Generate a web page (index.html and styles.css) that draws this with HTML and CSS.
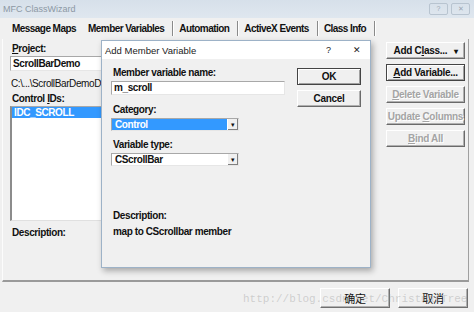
FILE: index.html
```html
<!DOCTYPE html>
<html lang="en">
<head>
    <meta charset="UTF-8">
    <title>MFC ClassWizard</title>
    <link rel="stylesheet" href="styles.css">
</head>
<body>
    <div class="window">
        <div class="titlebar">
            <span class="title">MFC ClassWizard</span>
            <div class="caption-btns">
                <span class="cap-btn">?</span>
                <span class="cap-btn">&#x2715;</span>
            </div>
        </div>

        <div class="tabs">
            <span class="tab">Message Maps</span>
            <span class="tab sep">Member Variables</span>
            <span class="tab sep">Automation</span>
            <span class="tab sep">ActiveX Events</span>
            <span class="tab sep">Class Info</span>
        </div>

        <div class="panel">
            <div class="left">
                <label class="lbl first"><u>P</u>roject:</label>
                <div class="field">ScrollBarDemo</div>
                <div class="path">C:\...\ScrollBarDemoDlg.h, ScrollBarDemoDlg.cpp</div>
                <label class="lbl ids">Control <u>I</u>Ds:</label>
                <div class="listbox">
                    <div class="list-item selected">IDC_SCROLL</div>
                </div>
                <label class="lbl">Description:</label>
            </div>
            <div class="actions">
                <button class="btn">Add C<u>l</u>ass... <span class="arrow">&#9662;</span></button>
                <button class="btn default"><u>A</u>dd Variable...</button>
                <button class="btn disabled"><u>D</u>elete Variable</button>
                <button class="btn disabled">Update <u>C</u>olumns</button>
                <button class="btn disabled"><u>B</u>ind All</button>
            </div>
        </div>

        <div class="footer">
            <button class="btn cjk">确定</button>
            <button class="btn cjk">取消</button>
        </div>

        <div class="watermark">http://blog.csdn.net/ChristmasTree</div>

        <div class="dialog">
            <div class="dlg-title">
                <span>Add Member Variable</span>
                <span class="dlg-help">?</span>
                <span class="dlg-close">&#x2715;</span>
            </div>
            <div class="dlg-body">
                <div class="dlg-form">
                    <label class="lbl first">Member variable name:</label>
                    <div class="field name">m_scroll</div>
                    <label class="lbl cat">Category:</label>
                    <div class="combo">
                        <span class="combo-text selected">Control</span>
                        <span class="combo-btn">&#9662;</span>
                    </div>
                    <label class="lbl vtype">Variable type:</label>
                    <div class="combo">
                        <span class="combo-text">CScrollBar</span>
                        <span class="combo-btn">&#9662;</span>
                    </div>
                    <label class="lbl desc">Description:</label>
                    <div class="desc-text">map to CScrollbar member</div>
                </div>
                <div class="dlg-buttons">
                    <button class="btn default">OK</button>
                    <button class="btn">Cancel</button>
                </div>
            </div>
        </div>
    </div>
</body>
</html>
```

FILE: styles.css
```css
body {
    margin: 0;
    background: #f0f0f0;
    font-family: "Liberation Sans", Arial, sans-serif;
    font-size: 10px;
    color: #111;
}
.window {
    position: relative;
    width: 474px;
    height: 312px;
    overflow: hidden;
    background: #f0f0f0;
    display: flex;
    flex-direction: column;
}
.titlebar {
    height: 18px;
    flex: none;
    display: flex;
    align-items: center;
    justify-content: space-between;
    padding: 0 4px 0 3px;
    background: linear-gradient(#d6e0ea, #dfe7ef);
}
.title {
    color: #8c98a4;
    font-size: 9px;
}
.caption-btns {
    display: flex;
    gap: 3px;
}
.cap-btn {
    width: 17px;
    height: 10px;
    border: 1px solid #b8c4d0;
    border-radius: 2px;
    color: #9aa6b2;
    font-size: 7px;
    line-height: 10px;
    text-align: center;
}

/* --- Tabs --- */
.tabs {
    height: 21px;
    flex: none;
    display: flex;
    align-items: center;
    padding-left: 6px;
}
.tab {
    font-weight: bold;
    letter-spacing: -0.55px;
    padding: 0 6px;
    line-height: 15px;
}
.tab.sep {
    border-right: 1px solid #8a8a8a;
    box-shadow: 1px 0 0 #fff;
    padding-right: 8px;
}

/* --- Main panel --- */
.panel {
    flex: 1;
    display: flex;
    margin: 0 5px 0 2px;
    border-left: 1px solid #fcfcfc;
    border-right: 1px solid #a0a0a0;
    border-bottom: 2px solid #9a9a9a;
    padding: 2px 3px 0 7px;
}
.left {
    width: 352px;
    display: flex;
    flex-direction: column;
}
.lbl {
    font-weight: bold;
    letter-spacing: -0.4px;
    line-height: 12px;
    margin-top: 6px;
    margin-left: 2px;
}
.lbl.first {
    margin-top: 2px;
}
.field {
    height: 13px;
    margin-top: 1px;
    background: #fff;
    border: 1px solid #a8a8a8;
    border-right-color: #e6e6e6;
    border-bottom-color: #e6e6e6;
    font-weight: bold;
    letter-spacing: -0.4px;
    line-height: 13px;
    padding-left: 2px;
    white-space: nowrap;
    overflow: hidden;
}
.path {
    width: 91px;
    margin-top: 7px;
    margin-left: 1px;
    letter-spacing: -0.4px;
    line-height: 12px;
    white-space: nowrap;
    overflow: hidden;
}
.lbl.ids {
    margin-top: 3px;
}
.listbox {
    height: 113px;
    margin-top: 1px;
    background: #fff;
    border-left: 2px solid #8c8c8c;
    border-top: 1px solid #a8a8a8;
    border-right: 1px solid #e0e0e0;
    border-bottom: 1px solid #e0e0e0;
}
.list-item {
    height: 11px;
    line-height: 11px;
    padding-left: 2px;
    font-weight: bold;
    letter-spacing: -0.4px;
}
.selected {
    background: #3399ff;
    color: #fff;
}
.left .lbl:last-child {
    margin-top: 6px;
}

/* --- Buttons --- */
.btn {
    font-family: inherit;
    font-size: 10px;
    font-weight: bold;
    letter-spacing: -0.3px;
    color: #111;
    width: 79px;
    height: 17px;
    padding: 0;
    background: #f0f0f0;
    border: 1px solid;
    border-color: #fff #6a6a6a #6a6a6a #fff;
    box-shadow: inset -1px -1px 0 #b0b0b0;
    text-align: center;
}
.btn.default {
    border-color: #444;
    box-shadow: inset 1px 1px 0 #fff, inset -1px -1px 0 #a0a0a0;
}
.btn.disabled {
    color: #a4a4a4;
    text-shadow: 1px 1px 0 #fff;
}
.arrow {
    font-size: 8px;
    margin-left: 4px;
}
.actions {
    margin-left: 24px;
    display: flex;
    flex-direction: column;
    gap: 5px;
    padding-top: 1px;
}

/* --- Footer --- */
.footer {
    height: 28px;
    flex: none;
    display: flex;
    justify-content: flex-end;
    align-items: center;
    gap: 8px;
    padding: 2px 6px 0 0;
}
.btn.cjk {
    width: 70px;
    height: 20px;
    font-family: "Noto Sans CJK SC", sans-serif;
    font-weight: normal;
    font-size: 11px;
    border-color: #fff #707070 #707070 #fff;
}
.watermark {
    position: absolute;
    left: 243px;
    top: 293px;
    font-family: "Liberation Mono", monospace;
    font-size: 11px;
    color: rgba(140, 140, 140, 0.35);
    pointer-events: none;
}

/* --- Dialog --- */
.dialog {
    position: absolute;
    left: 101px;
    top: 40px;
    width: 268px;
    height: 226px;
    background: #f0f0f0;
    border: 1px solid #9db2c7;
    box-shadow: 2px 3px 6px rgba(0, 0, 0, 0.3);
    display: flex;
    flex-direction: column;
}
.dlg-title {
    height: 18px;
    background: #fff;
    display: flex;
    align-items: center;
    padding-left: 3px;
    font-size: 9.5px;
    color: #222;
}
.dlg-help {
    margin-left: auto;
    font-size: 9px;
}
.dlg-close {
    margin: 0 9px 0 22px;
    font-size: 9px;
}
.dlg-body {
    display: flex;
    padding: 8px 0 0 9px;
}
.dlg-form {
    width: 174px;
    display: flex;
    flex-direction: column;
}
.dlg-form .lbl.first {
    margin-top: 0;
}
.field.name {
    height: 12px;
    line-height: 12px;
    margin-top: 2px;
}
.lbl.cat {
    margin-top: 9px;
}
.lbl.vtype {
    margin-top: 8px;
}
.combo {
    width: 126px;
    height: 11px;
    margin-top: 2px;
    background: #fff;
    border: 1px solid #a8a8a8;
    border-right-color: #e6e6e6;
    border-bottom-color: #e6e6e6;
    display: flex;
}
.combo-text {
    flex: 1;
    font-weight: bold;
    letter-spacing: -0.4px;
    line-height: 11px;
    padding-left: 3px;
}
.combo-btn {
    width: 10px;
    font-size: 7px;
    line-height: 11px;
    text-align: center;
    background: #f0f0f0;
    border-left: 1px solid #fff;
    box-shadow: inset -1px -1px 0 #808080;
}
.lbl.desc {
    margin-top: 44px;
}
.desc-text {
    margin-top: 4px;
    margin-left: 2px;
    font-weight: bold;
    letter-spacing: -0.4px;
    line-height: 12px;
}
.dlg-buttons {
    margin-left: 12px;
    margin-top: 1px;
    display: flex;
    flex-direction: column;
    gap: 5px;
}
.dlg-buttons .btn {
    width: 64px;
}
```
